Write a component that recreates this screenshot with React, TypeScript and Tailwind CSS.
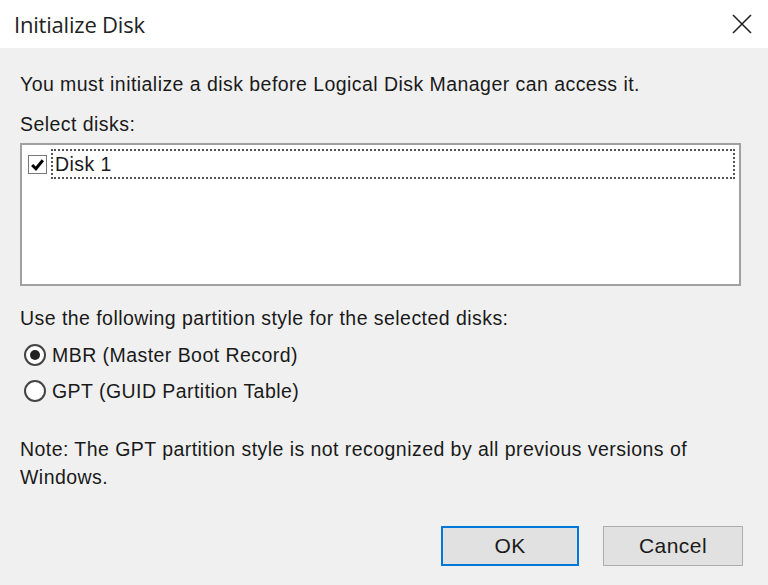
export default function App() {
  const body = { fontFamily: '"Liberation Sans", Arial, sans-serif', letterSpacing: "0.45px" };

  return (
    <div className="flex h-[585px] w-[768px] flex-col bg-[#f0f0f0] text-[#1a1a1a]" style={body}>
      {/* title bar */}
      <div className="flex h-[48px] items-center justify-between bg-white pl-[14px] pr-[16px]">
        <span
          className="text-[22px] text-[#222]"
          style={{ fontFamily: '"Open Sans", sans-serif', letterSpacing: "-0.2px" }}
        >
          Initialize Disk
        </span>
        <svg width="20" height="20" viewBox="0 0 20 20" className="text-[#222]">
          <path d="M1 1 L19 19 M19 1 L1 19" stroke="currentColor" strokeWidth="1.6" />
        </svg>
      </div>

      <div className="flex flex-1 flex-col px-[20px] pt-[25px] text-[19.5px] leading-[22px]">
        <p>You must initialize a disk before Logical Disk Manager can access it.</p>
        <p className="mt-[18px]">Select disks:</p>

        <div className="mt-[8px] h-[143px] w-[721px] border-2 border-[#a0a0a0] bg-white p-[4px]">
          <div className="flex items-center">
            <span className="ml-[2px] flex h-[19px] w-[19px] items-center justify-center border border-[#777] bg-white">
              <svg width="15" height="15" viewBox="0 0 14 14">
                <path d="M2 7.5 L5.5 11 L12 3" fill="none" stroke="#000" strokeWidth="2.8" />
              </svg>
            </span>
            <span className="ml-[4px] flex h-[30px] flex-1 items-center border-2 border-dotted border-[#555] pl-[2px]">
              Disk 1
            </span>
          </div>
        </div>

        <p className="mt-[21px]">Use the following partition style for the selected disks:</p>

        <div className="mt-[15px] flex flex-col gap-[14px] pl-[4px]">
          <label className="flex items-center gap-[6px]">
            <span className="flex h-[22px] w-[22px] items-center justify-center rounded-full border-2 border-[#444] bg-white">
              <span className="h-[10px] w-[10px] rounded-full bg-[#222]" />
            </span>
            MBR (Master Boot Record)
          </label>
          <label className="flex items-center gap-[6px]">
            <span className="h-[22px] w-[22px] rounded-full border-2 border-[#444] bg-white" />
            GPT (GUID Partition Table)
          </label>
        </div>

        <p className="mt-[33px] leading-[28px]">
          Note: The GPT partition style is not recognized by all previous versions of
          <br />
          Windows.
        </p>

        <div className="mt-[35px] flex justify-end gap-[24px] pr-[5px]">
          <button className="h-[40px] w-[138px] border-2 border-[#0078d7] bg-[#e1e1e1] text-[21px]">
            OK
          </button>
          <button className="h-[40px] w-[140px] border border-[#adadad] bg-[#e1e1e1] text-[21px]">
            Cancel
          </button>
        </div>
      </div>
    </div>
  );
}
